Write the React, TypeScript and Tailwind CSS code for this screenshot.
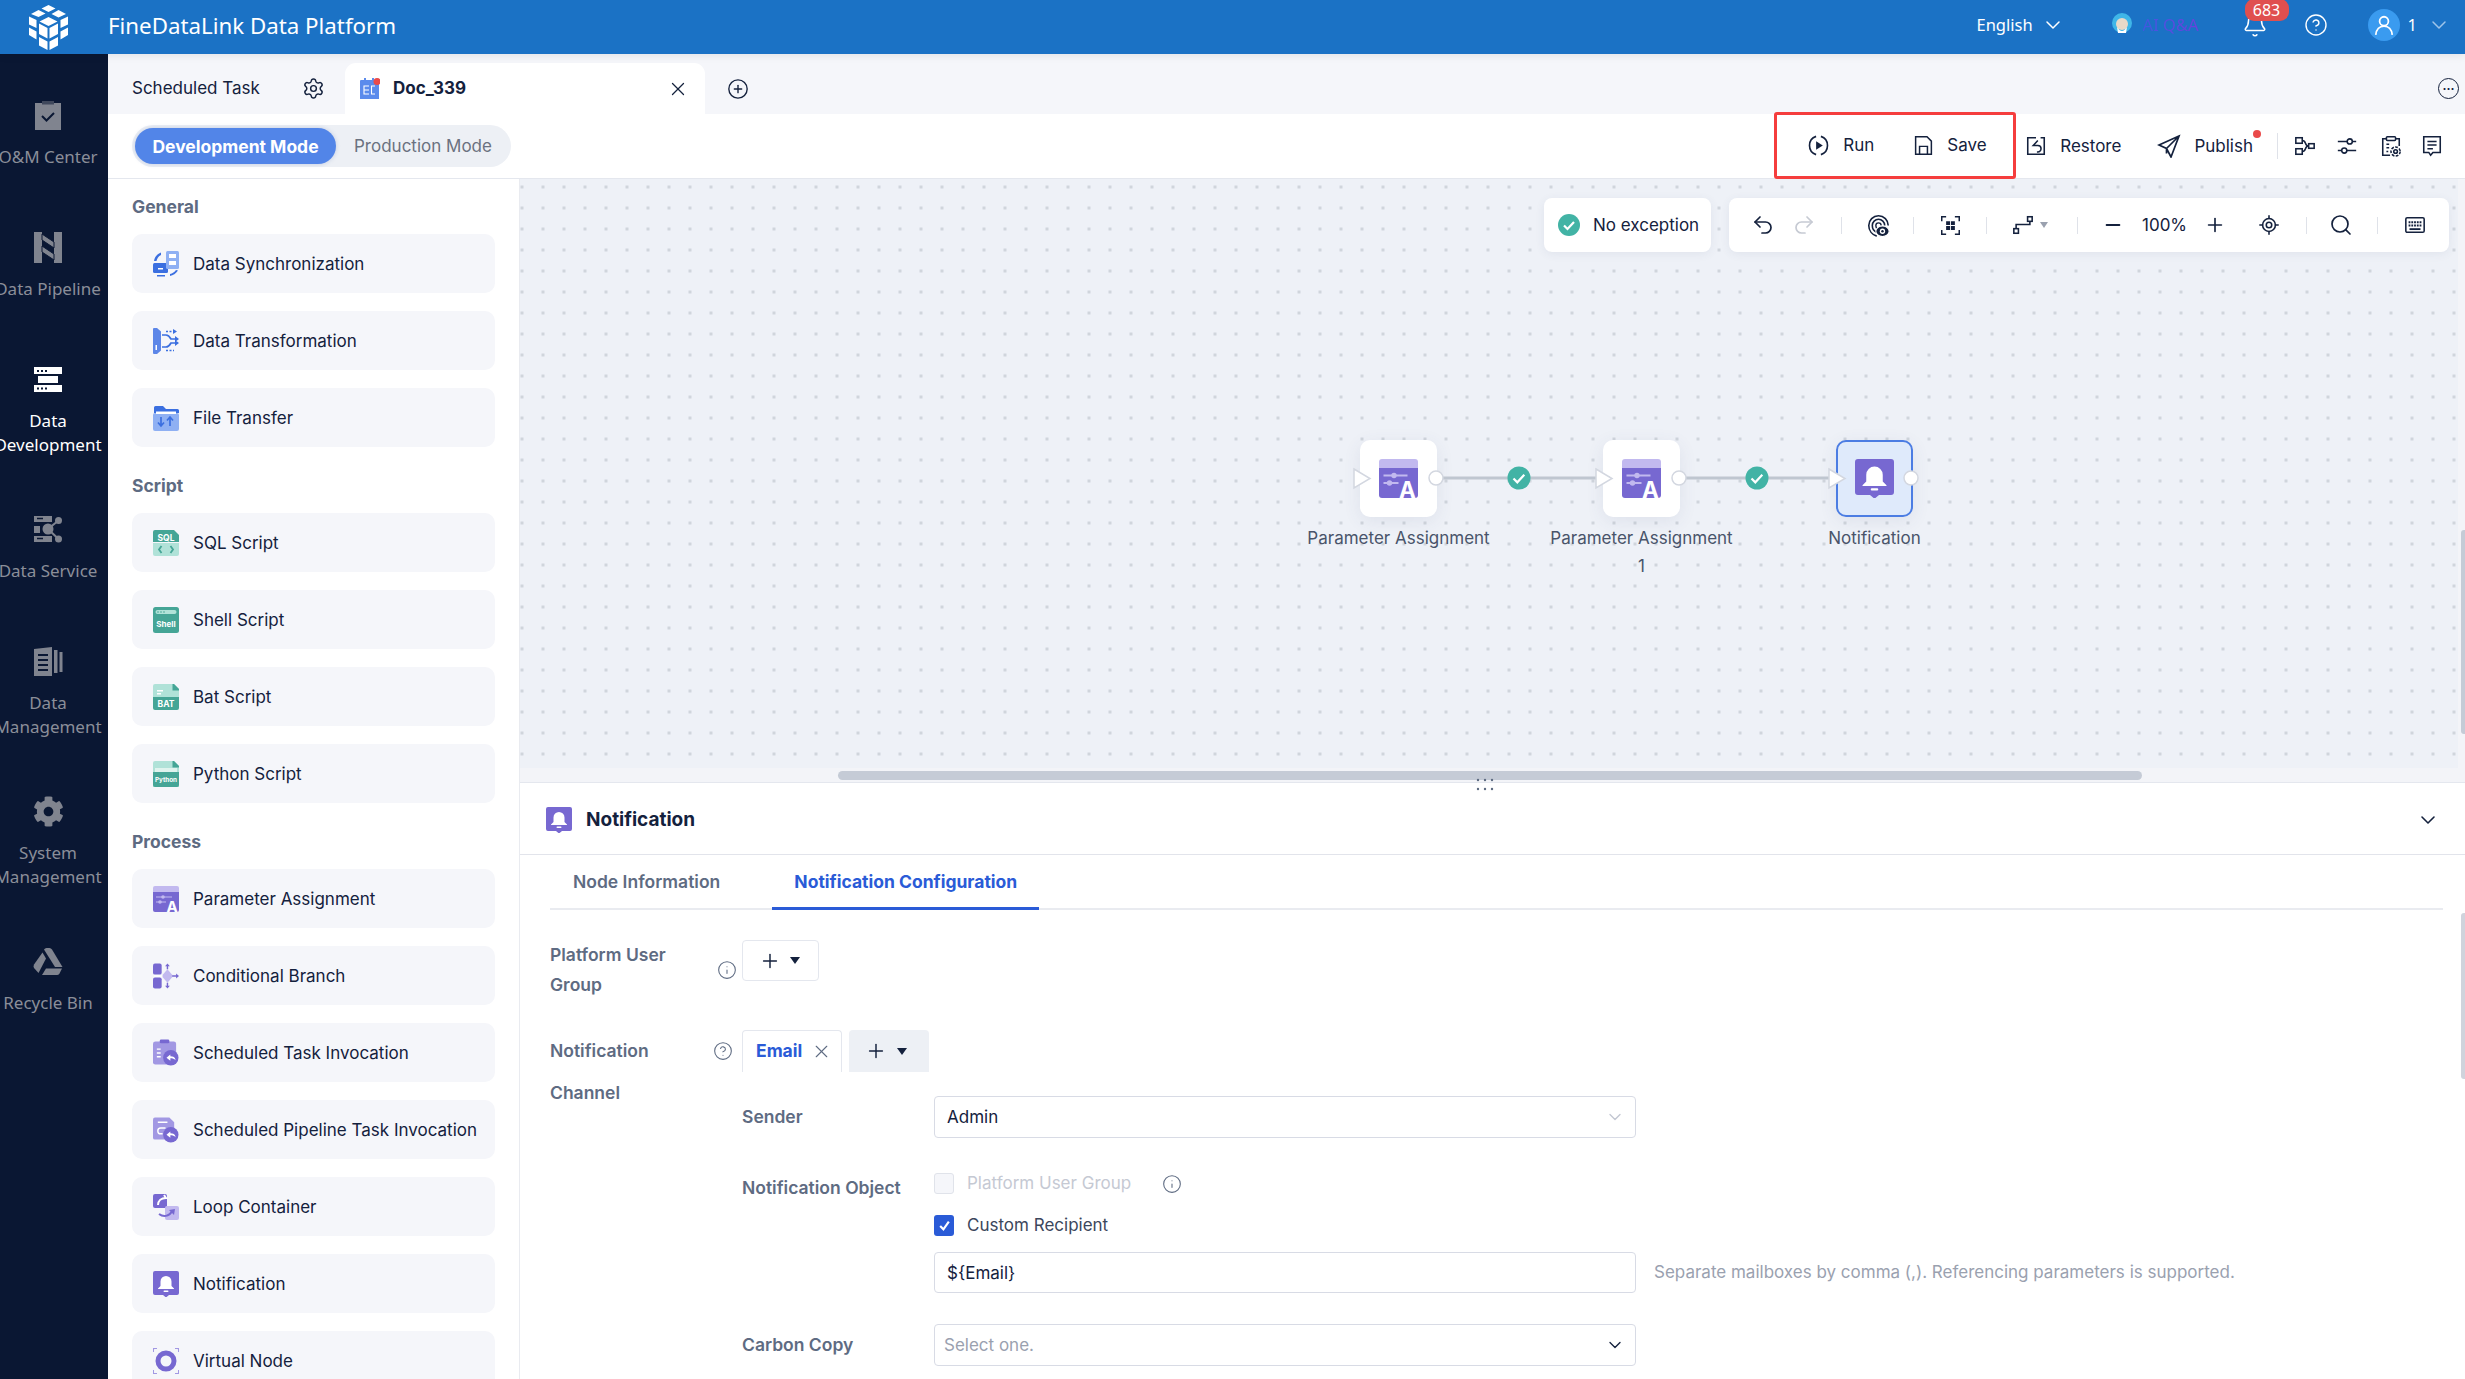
import { ReactNode } from "react";
import {
  Bell,
  ChevronDown,
  CircleHelp,
  CirclePlus,
  Info,
  LocateFixed,
  Minus,
  Plus,
  Redo2,
  Search,
  Settings,
  Undo2,
  X,
} from "lucide-react";
import { FaCog } from "react-icons/fa";

const PURPLE = "#7768d1";
const LILAC = "#c2b9ef";
const TEAL = "#45a596";
const MINT = "#b0e2d8";
const BLUE = "#3b6fe0";
const SKY = "#8fb0f3";

type IconProps = { className?: string };

/* ---------- coloured node icons ---------- */

function SyncIcon({ className }: IconProps) {
  return (
    <svg viewBox="0 0 26 26" className={className}>
      <rect x="0" y="12" width="15" height="10" rx="1.5" fill={BLUE} />
      <rect x="5" y="17" width="5" height="1.5" fill="#fff" />
      <path d="M4 24h8v1.5H4z" fill={BLUE} />
      <rect x="13" y="0" width="13" height="18" rx="1.5" fill={SKY} />
      <rect x="16" y="3" width="7" height="4" fill="#fff" />
      <rect x="16" y="10" width="7" height="4" fill="#fff" />
      <path d="M1 10c.5-4 3-7 7-8.500v2.500c-2.500 1-4 3.500-4.500 6z" fill={BLUE} />
      <path d="M17 25c3-.5 6-2.500 8-5.500l-2-.5c-1.500 2-3.500 3.500-6 4z" fill={BLUE} />
    </svg>
  );
}

function TransformIcon({ className }: IconProps) {
  return (
    <svg viewBox="0 0 26 26" className={className}>
      <path d="M1 0h3l4 3.500v19L4 26H1a1 1 0 0 1-1-1V1a1 1 0 0 1 1-1z" fill="#5c86e8" />
      <rect x="2.500" y="17" width="1.500" height="5" fill="#fff" />
      <g fill="none" stroke={BLUE} strokeWidth="1.700">
        <path d="M9 7h4c2 0 3 .5 5 4h4" />
        <path d="M9 19h4c2 0 3-.5 5-4h4" />
        <path d="M13 3.500h8" strokeDasharray="2 1.500" />
        <path d="M13 22.500h8" strokeDasharray="2 1.500" />
      </g>
      <path d="M22 8l4 3-4 3zM22 12l4 3-4 3z" fill={BLUE} />
      <path d="M20 1l4 2.500-4 2.500z" fill={BLUE} />
    </svg>
  );
}

function FolderIcon({ className }: IconProps) {
  return (
    <svg viewBox="0 0 26 26" className={className}>
      <path d="M1 6V2.500A1.500 1.500 0 0 1 2.500 1H10l3 3h11.500A1.500 1.500 0 0 1 26 5.500V8H1z" fill={BLUE} />
      <rect x="0" y="8" width="26" height="18" rx="2" fill={SKY} />
      <path d="M3 6.500h20V9H3z" fill="#fff" />
      <path d="M8 12v8M5 17.500l3 3.500 3-3.500" stroke={BLUE} strokeWidth="1.700" fill="none" />
      <path d="M17 21v-8M14 15.500l3-3.500 3 3.500" stroke={BLUE} strokeWidth="1.700" fill="none" />
    </svg>
  );
}

function SqlIcon({ className }: IconProps) {
  return (
    <svg viewBox="0 0 26 26" className={className}>
      <path d="M2 0h19l5 5v7H0V2a2 2 0 0 1 2-2z" fill={TEAL} />
      <path d="M0 13h26v11a2 2 0 0 1-2 2H2a2 2 0 0 1-2-2z" fill={MINT} />
      <text x="13" y="10.500" textAnchor="middle" fontSize="8.500" fontWeight="700" fill="#fff" fontFamily="Inter, sans-serif">SQL</text>
      <path d="M8.500 16l-2.500 3.500 2.500 3.500M17.500 16l2.500 3.500-2.500 3.500" fill="none" stroke={TEAL} strokeWidth="1.800" />
    </svg>
  );
}

function ShellIcon({ className }: IconProps) {
  return (
    <svg viewBox="0 0 26 26" className={className}>
      <rect width="26" height="26" rx="2.500" fill={TEAL} />
      <rect x="2.500" y="3" width="21" height="4" rx="2" fill={MINT} />
      <circle cx="5" cy="5" r=".8" fill={TEAL} />
      <circle cx="8" cy="5" r=".8" fill={TEAL} />
      <circle cx="11" cy="5" r=".8" fill={TEAL} />
      <text x="13" y="19.500" textAnchor="middle" fontSize="8" fontWeight="700" fill="#fff" fontFamily="Inter, sans-serif">Shell</text>
    </svg>
  );
}

function BatIcon({ className }: IconProps) {
  return (
    <svg viewBox="0 0 26 26" className={className}>
      <path d="M2 0h19l5 5v8H0V2a2 2 0 0 1 2-2z" fill={MINT} />
      <path d="M19.500 0H21l5 5v1.500h-6.500z" fill={TEAL} />
      <path d="M4 6h6v1.500H4zM4 9h4v1.500H4z" fill="#fff" />
      <path d="M0 13h26v11a2 2 0 0 1-2 2H2a2 2 0 0 1-2-2z" fill={TEAL} />
      <text x="13" y="22.500" textAnchor="middle" fontSize="8.500" fontWeight="700" fill="#fff" fontFamily="Inter, sans-serif">BAT</text>
    </svg>
  );
}

function PythonIcon({ className }: IconProps) {
  return (
    <svg viewBox="0 0 26 26" className={className}>
      <path d="M2 0h19l5 5v21H0V2a2 2 0 0 1 2-2z" fill={MINT} />
      <path d="M19.500 0H21l5 5v1.500h-6.500z" fill={TEAL} />
      <path d="M2 7h22v4H2z" fill="#dff3ee" />
      <path d="M0 11h26v13a2 2 0 0 1-2 2H2a2 2 0 0 1-2-2z" fill={TEAL} />
      <text x="13" y="21" textAnchor="middle" fontSize="6.300" fontWeight="700" fill="#fff" fontFamily="Inter, sans-serif">Python</text>
    </svg>
  );
}

function ParamIcon({ className }: IconProps) {
  return (
    <svg viewBox="0 0 26 26" className={className}>
      <path d="M2 0h22a2 2 0 0 1 2 2v4H0V2a2 2 0 0 1 2-2z" fill={LILAC} />
      <path d="M0 6h26v18a2 2 0 0 1-2 2H2a2 2 0 0 1-2-2z" fill={PURPLE} />
      <path d="M3 11h16M3 16h10" stroke={LILAC} strokeWidth="1.200" />
      <circle cx="10" cy="11" r="1.800" fill={LILAC} />
      <circle cx="7" cy="16" r="1.800" fill={LILAC} />
      <text x="19" y="26" textAnchor="middle" fontSize="15" fontWeight="700" fill="#fff" fontFamily="Inter, sans-serif">A</text>
    </svg>
  );
}

function BranchIcon({ className }: IconProps) {
  return (
    <svg viewBox="0 0 27 26" className={className}>
      <rect x="0" y="0" width="9" height="11.500" rx="2" fill={PURPLE} />
      <rect x="0" y="14.500" width="9" height="11.500" rx="2" fill={PURPLE} />
      <path d="M15 6l6 7-6 7-6-7z" fill={LILAC} />
      <path d="M1 13h9" stroke="#fff" strokeWidth="1.500" />
      <path d="M15 6V2M15 20v4M20 13h5" stroke={PURPLE} strokeWidth="1.500" />
      <path d="M12.500 3L15 0l2.500 3zM12.500 23l2.500 3 2.500-3zM24 10.500l3 2.500-3 2.500z" fill={PURPLE} />
    </svg>
  );
}

function InvokeIcon({ className, pipeline }: IconProps & { pipeline?: boolean }) {
  return (
    <svg viewBox="0 0 27 27" className={className}>
      {pipeline ? (
        <path d="M2 1h15l5 5v18H2a2 2 0 0 1-2-2V3a2 2 0 0 1 2-2z" fill="#a298e3" />
      ) : (
        <>
          <rect x="0" y="2" width="24" height="24" rx="2.500" fill="#a298e3" />
          <rect x="7" y="0" width="10" height="4" rx="1.500" fill={PURPLE} />
        </>
      )}
      {pipeline ? (
        <path d="M5 6h10M13 12H8a3 3 0 0 0 0 6h2" stroke="#fff" strokeWidth="1.500" fill="none" />
      ) : (
        <path d="M4 10h4M4 14h4M4 18h4" stroke="#fff" strokeWidth="1.500" />
      )}
      <circle cx="18.500" cy="19" r="8" fill={PURPLE} />
      <path d="M14 19l4-3.500v2c3 0 5 1 5.500 4-1.500-1.500-3-2-5.500-2v2.500z" fill="#fff" />
    </svg>
  );
}

function LoopIcon({ className }: IconProps) {
  return (
    <svg viewBox="0 0 26 26" className={className}>
      <rect x="0" y="0" width="14" height="14" rx="2" fill={PURPLE} />
      <rect x="12" y="12" width="14" height="14" rx="2" fill={LILAC} />
      <path d="M5 11c0-4 3-7 8-7l-2-3" stroke="#fff" strokeWidth="2" fill="none" />
      <path d="M6 20c4 3 10 3 13-3" stroke={PURPLE} strokeWidth="2" fill="none" />
      <path d="M16 16l6-1-1 6z" fill={PURPLE} />
    </svg>
  );
}

function NoticeIcon({ className }: IconProps) {
  return (
    <svg viewBox="0 0 26 26" className={className}>
      <path d="M2 0h22a2 2 0 0 1 2 2v20a2 2 0 0 1-2 2h-8l-3 2.500L10 24H2a2 2 0 0 1-2-2V2a2 2 0 0 1 2-2z" fill={PURPLE} />
      <path d="M13 5a5.500 5.500 0 0 1 5.500 5.500V15l2.500 2.500V18H5v-.5L7.500 15v-4.500A5.500 5.500 0 0 1 13 5z" fill="#fff" />
      <rect x="10.500" y="19.500" width="5" height="1.500" rx=".7" fill="#fff" />
    </svg>
  );
}

function VirtualIcon({ className }: IconProps) {
  return (
    <svg viewBox="0 0 26 26" className={className}>
      <circle cx="13" cy="13" r="8" fill="none" stroke={PURPLE} strokeWidth="5" />
      <path d="M0 4V1.500A1.500 1.500 0 0 1 1.500 0H4M22 0h2.500A1.500 1.500 0 0 1 26 1.500V4M26 22v2.500a1.500 1.500 0 0 1-1.500 1.500H22M4 26H1.500A1.500 1.500 0 0 1 0 24.500V22" fill="none" stroke="#a298e3" strokeWidth="2" />
    </svg>
  );
}

/* ---------- side rail icons ---------- */

function RailClipboard({ className }: IconProps) {
  return (
    <svg viewBox="0 0 26 29" className={className}>
      <path d="M0 2h7V0h12v2h7v29H0z" fill="#80848f" />
      <rect x="7" y="0" width="12" height="3.500" fill="#0a1733" opacity=".55" />
      <path d="M7 15l4.500 4.500L19 12" fill="none" stroke="#0a1733" strokeWidth="2" />
    </svg>
  );
}

function RailPipeline({ className }: IconProps) {
  return (
    <svg viewBox="0 0 28 31" className={className}>
      <path d="M0 0h8v31H0zM20 0h8v31h-8z" fill="#80848f" />
      <path d="M8 2l12 8v6L8 8zM8 14l12 8v6L8 20z" fill="#80848f" stroke="#0a1733" strokeWidth="1" />
    </svg>
  );
}

function RailDev({ className }: IconProps) {
  return (
    <svg viewBox="0 0 28 25" className={className}>
      <path d="M0 0h28v7H0zM0 18h28v7H0z" fill="#fff" />
      <path d="M4 9h20v7H4z" fill="#fff" />
      <path d="M3 3h2v2H3zM7 3h2v2H7zM11 3h2v2h-2zM3 20.500h2v2H3zM7 20.500h2v2H7zM11 20.500h2v2h-2z" fill="#0a1733" />
    </svg>
  );
}

function RailService({ className }: IconProps) {
  return (
    <svg viewBox="0 0 28 28" className={className}>
      <path d="M0 1h18v6H0zM0 11h6v7H0zM0 21h18v6H0z" fill="#80848f" />
      <path d="M3 3.500h6M3 23.500h6" stroke="#0a1733" strokeWidth="1.500" />
      <circle cx="14" cy="14" r="5.500" fill="#80848f" />
      <circle cx="24.500" cy="5.500" r="3.500" fill="#80848f" />
      <circle cx="24.500" cy="24" r="3.500" fill="#80848f" />
      <path d="M14 14L24.500 5.500M14 14l10.500 10" stroke="#80848f" strokeWidth="2" />
    </svg>
  );
}

function RailManage({ className }: IconProps) {
  return (
    <svg viewBox="0 0 29 29" className={className}>
      <path d="M0 2l18-2v29H0z" fill="#80848f" />
      <path d="M4 8h10M4 13h10M4 18h10M4 23h10" stroke="#0a1733" strokeWidth="2" />
      <rect x="20" y="3" width="3.500" height="23" fill="#80848f" />
      <rect x="25.500" y="5" width="3" height="20" fill="#80848f" />
    </svg>
  );
}

function RailRecycle({ className }: IconProps) {
  return (
    <svg viewBox="0 0 30 27" className={className}>
      <path d="M11 1.500Q12 0 13.500 0h3Q18 0 19 1.500L29.500 19 22 19 11 1.500z" fill="#80848f" />
      <path d="M9.500 4.500L13 10.500 5.500 25 1 20Q0 18.500 1 16.500z" fill="#80848f" />
      <path d="M9 27l4-6.500h16l-2.500 5Q25.500 27 24 27z" fill="#80848f" />
    </svg>
  );
}

function Logo({ className }: IconProps) {
  return (
    <svg viewBox="0 0 41 45" className={className} fill="#fff">
      <path d="M20.500 0l7 3.500-7 3.500-7-3.500zM10.500 5l7 3.500-7 3.500L3 9zM30.500 5l7.500 4-7.500 3.500-7-3.500z" />
      <path d="M20.500 12l9 4.500-9 4.500-9-4.500zM11 18.500l8.500 4.500v10.500L11 29zM30 18.500v10.500l-8.500 4.500V23z" />
      <path d="M1 11.500l7.500 3.500v8L1 19.500zM40 11.500v8L32.500 23v-8zM1 22.500l7.500 4v8L1 30zM40 22.500V30l-7.500 4.500v-8z" />
      <path d="M11 32l8.500 4.500V45l-8.500-4.500zM30 32v8.500L21.500 45v-8.500z" />
    </svg>
  );
}

/* ---------- toolbar icons ---------- */

const line = {
  fill: "none",
  stroke: "#14213d",
  strokeWidth: 1.7,
};

function RunIcon({ className }: IconProps) {
  return (
    <svg viewBox="0 0 24 24" className={className} {...line}>
      <path d="M9.500 2.500a10 10 0 0 0 0 19M14.500 2.500a10 10 0 0 1 0 19" />
      <path d="M9.500 7.500l7 4.500-7 4.500z" fill="#14213d" stroke="none" />
    </svg>
  );
}

function SaveIcon({ className }: IconProps) {
  return (
    <svg viewBox="0 0 24 24" className={className} {...line}>
      <path d="M3 2h13l5 5v15H3z" />
      <path d="M7.500 22v-9h9v9" />
    </svg>
  );
}

function RestoreIcon({ className }: IconProps) {
  return (
    <svg viewBox="0 0 24 24" className={className} {...line}>
      <path d="M12 3H3v18h18V3h-4" />
      <path d="M14 6l-5 5.500h5a3.500 3.500 0 0 1 0 7h-1" />
    </svg>
  );
}

function PublishIcon({ className }: IconProps) {
  return (
    <svg viewBox="0 0 24 24" className={className} {...line}>
      <path d="M22 2L2 11l7.500 3.500L14 23zM22 2L9.500 14.500v5" />
    </svg>
  );
}

function FlowIcon({ className }: IconProps) {
  return (
    <svg viewBox="0 0 24 24" className={className} {...line}>
      <rect x="2" y="3" width="7" height="6" />
      <rect x="2" y="15" width="7" height="6" />
      <rect x="16" y="9.500" width="6" height="5" />
      <path d="M9 6c5 0 2 6 7 6M9 18c5 0 2-6 7-6" />
    </svg>
  );
}

function SlidersIcon({ className }: IconProps) {
  return (
    <svg viewBox="0 0 24 24" className={className} {...line}>
      <path d="M2 7h20M2 17h20" />
      <circle cx="15" cy="7" r="2.800" fill="#fff" />
      <circle cx="9" cy="17" r="2.800" fill="#fff" />
    </svg>
  );
}

function ClipGearIcon({ className }: IconProps) {
  return (
    <svg viewBox="0 0 24 24" className={className} {...line}>
      <path d="M11 22H3V4h4M17 4h4v8" />
      <rect x="7" y="2" width="10" height="4" rx="1" />
      <path d="M7 10h3M7 14h3M7 18h2" />
      <circle cx="17" cy="18" r="2" />
      <circle cx="17" cy="18" r="5" strokeDasharray="3 1.500" />
    </svg>
  );
}

function NoteIcon({ className }: IconProps) {
  return (
    <svg viewBox="0 0 24 24" className={className} {...line}>
      <path d="M3 2h18v17h-8l-2.500 3-2-3H3z" />
      <path d="M7 7h10M7 11h10M7 15h6" />
    </svg>
  );
}

function WatchIcon({ className }: IconProps) {
  return (
    <svg viewBox="0 0 24 26" className={className} {...line}>
      <path d="M10 25C5 23.500 1 19 1 13a11 11 0 0 1 22 0" strokeWidth="1.800" />
      <path d="M10 20.500C7 19.500 5 16.500 5 13a7 7 0 0 1 14 0" strokeWidth="1.800" />
      <path d="M10 16.500C9.500 15.500 9 14.500 9 13a3 3 0 0 1 6 0" strokeWidth="1.600" />
      <ellipse cx="16.500" cy="19.500" rx="7.500" ry="6" fill="#14213d" stroke="#fff" strokeWidth="1.200" />
      <circle cx="16.500" cy="19.500" r="3" fill="#fff" stroke="none" />
      <circle cx="16.500" cy="19.500" r="1.400" fill="#14213d" stroke="none" />
    </svg>
  );
}

function FitIcon({ className }: IconProps) {
  return (
    <svg viewBox="0 0 24 24" className={className} {...line}>
      <path d="M2 7V2h5M17 2h5v5M22 17v5h-5M7 22H2v-5" />
      <path d="M7 7h4.500v4.500H7zM12.500 7H17v4.500h-4.500zM7 12.500h4.500V17H7zM12.500 12.500H17V17h-4.500z" fill="#14213d" stroke="none" />
    </svg>
  );
}

function RouteIcon({ className }: IconProps) {
  return (
    <svg viewBox="0 0 24 24" className={className} {...line}>
      <rect x="2" y="16" width="5" height="5" />
      <rect x="17" y="3" width="5" height="5" />
      <path d="M4.500 16v-4.500h15V8" />
    </svg>
  );
}

function KeyboardIcon({ className }: IconProps) {
  return (
    <svg viewBox="0 0 24 24" className={className} {...line}>
      <rect x="2" y="4" width="20" height="16" rx="1.500" />
      <path d="M5 9h14M5 12.500h14" strokeWidth="2" strokeDasharray="2 1" />
      <path d="M6 16.500h12" strokeWidth="2" />
    </svg>
  );
}

function CheckDot({ className }: IconProps) {
  return (
    <svg viewBox="0 0 22 22" className={className}>
      <circle cx="11" cy="11" r="11" fill="#42b3a5" />
      <path d="M6 11.500l3.500 3.500 6.500-7" fill="none" stroke="#fff" strokeWidth="2.200" />
    </svg>
  );
}

function DocTabIcon({ className }: IconProps) {
  return (
    <svg viewBox="0 0 20 21" className={className}>
      <path d="M1 2h3V0h2v2h6V0h2v2h5v19H0V3a1 1 0 0 1 1-1z" fill="#5b8bec" />
      <path d="M9 8H4v8h5M4 12h5M15 8h-3.500v8H15" stroke="#fff" strokeWidth="1.100" fill="none" />
      <circle cx="17" cy="3.500" r="3.500" fill="#ea4a4a" />
    </svg>
  );
}

/* ---------- small pieces ---------- */

const rail: { label: string[]; icon: ReactNode; tall?: boolean; active?: boolean }[] = [
  { label: ["O&M Center"], icon: <RailClipboard className="h-[29px] w-[26px]" /> },
  { label: ["Data Pipeline"], icon: <RailPipeline className="h-[31px] w-[28px]" /> },
  { label: ["Data", "Development"], icon: <RailDev className="h-[25px] w-[28px]" />, tall: true, active: true },
  { label: ["Data Service"], icon: <RailService className="h-[28px] w-[28px]" /> },
  { label: ["Data", "Management"], icon: <RailManage className="h-[29px] w-[29px]" />, tall: true },
  { label: ["System", "Management"], icon: <FaCog className="h-[31px] w-[31px] text-[#80848f]" />, tall: true },
  { label: ["Recycle Bin"], icon: <RailRecycle className="h-[27px] w-[30px]" /> },
];

const groups: { title: string; items: { name: string; icon: ReactNode }[] }[] = [
  {
    title: "General",
    items: [
      { name: "Data Synchronization", icon: <SyncIcon className="h-[26px] w-[26px]" /> },
      { name: "Data Transformation", icon: <TransformIcon className="h-[26px] w-[26px]" /> },
      { name: "File Transfer", icon: <FolderIcon className="h-[26px] w-[26px]" /> },
    ],
  },
  {
    title: "Script",
    items: [
      { name: "SQL Script", icon: <SqlIcon className="h-[26px] w-[26px]" /> },
      { name: "Shell Script", icon: <ShellIcon className="h-[26px] w-[26px]" /> },
      { name: "Bat Script", icon: <BatIcon className="h-[26px] w-[26px]" /> },
      { name: "Python Script", icon: <PythonIcon className="h-[26px] w-[26px]" /> },
    ],
  },
  {
    title: "Process",
    items: [
      { name: "Parameter Assignment", icon: <ParamIcon className="h-[26px] w-[26px]" /> },
      { name: "Conditional Branch", icon: <BranchIcon className="h-[26px] w-[27px]" /> },
      { name: "Scheduled Task Invocation", icon: <InvokeIcon className="h-[27px] w-[27px]" /> },
      { name: "Scheduled Pipeline Task Invocation", icon: <InvokeIcon pipeline className="h-[27px] w-[27px]" /> },
      { name: "Loop Container", icon: <LoopIcon className="h-[26px] w-[26px]" /> },
      { name: "Notification", icon: <NoticeIcon className="h-[26px] w-[26px]" /> },
      { name: "Virtual Node", icon: <VirtualIcon className="h-[26px] w-[26px]" /> },
    ],
  },
];

function Sep() {
  return <span className="block h-[17px] w-px bg-[#dfe2e9]" />;
}

function Action({ icon, children, className }: { icon: ReactNode; children: ReactNode; className?: string }) {
  return (
    <div className={`flex items-center gap-[13px] ${className ?? ""}`}>
      {icon}
      <span className="pt-[2px]">{children}</span>
    </div>
  );
}

function GraphNode({ className, label, selected }: { className: string; label: string; selected?: boolean }) {
  return (
    <div
      className={`absolute top-[261px] flex h-[77px] w-[77px] items-center justify-center rounded-[10px] shadow-[0_4px_18px_rgba(70,80,120,0.09)] ${
        selected ? "border-2 border-[#4c7de3] bg-[#dfeafb]" : "bg-white"
      } ${className}`}
    >
      {selected ? <NoticeIcon className="h-[39px] w-[39px]" /> : <ParamIcon className="h-[39px] w-[39px]" />}
      <div
        className={`absolute left-1/2 w-[192px] -translate-x-1/2 text-center text-[17px] leading-[28px] text-[#49546a] ${
          selected ? "top-[82px]" : "top-[84px]"
        }`}
      >
        {label}
      </div>
    </div>
  );
}

function Wires() {
  const tri = [834, 1076, 1309];
  const ports = [916, 1159, 1391];
  const checks = [999, 1237];
  return (
    <svg className="pointer-events-none absolute inset-0 h-full w-full">
      <path d="M923 299H1090M1166 299H1316" stroke="#bfc6d0" strokeWidth="3" />
      {tri.map((x) => (
        <path key={x} d={`M${x} 290l16 9.500-16 9.500z`} fill="#fff" stroke="#d3d7e0" strokeWidth="1.500" />
      ))}
      {ports.map((x) => (
        <circle key={x} cx={x} cy="299" r="7" fill="#fff" stroke="#d3d7e0" strokeWidth="1.500" />
      ))}
      {checks.map((x) => (
        <g key={x}>
          <circle cx={x} cy="299" r="11.500" fill="#42b3a5" />
          <path d={`M${x - 5.500} 299.500l3.800 3.800 7-7.500`} fill="none" stroke="#fff" strokeWidth="2.200" />
        </g>
      ))}
    </svg>
  );
}

function SelectBox({ placeholder, value }: { placeholder?: string; value?: string }) {
  return (
    <div className="flex h-[42px] w-[702px] items-center justify-between rounded-[4px] border border-[#d8dbe5] pr-[10px] pl-[12px]">
      {value ? (
        <span className="pt-[2px]">{value}</span>
      ) : (
        <span className="-ml-[3px] pt-[2px] text-[#9aa1af]">{placeholder}</span>
      )}
      <ChevronDown className={value ? "h-[20px] w-[20px] text-[#c2c7d2]" : "h-[20px] w-[20px] text-[#14213d]"} strokeWidth={1.6} />
    </div>
  );
}

export default function App() {
  return (
    <div className="flex h-[1379px] w-[2465px] flex-col overflow-hidden bg-white font-['Inter',sans-serif] text-[17px] text-[#14213d]">
      <header className="relative z-10 flex h-[54px] shrink-0 items-center bg-[#1b72c5] pr-[14px] pl-[28px] font-['Noto_Sans',sans-serif] text-white shadow-[0_2px_8px_rgba(0,0,0,0.08)]">
        <Logo className="h-[45px] w-[41px]" />
        <span className="ml-[39px] pb-[2px] text-[22.300px]">FineDataLink Data Platform</span>
        <div className="ml-auto flex items-center text-[16.500px]">
          <span className="pb-[4px]">English</span>
          <ChevronDown className="ml-[8px] h-[24px] w-[24px] -translate-y-[2px]" strokeWidth={1.5} />
          <svg viewBox="0 0 22 26" className="ml-[46px] h-[26px] w-[22px] -translate-y-[2px]">
            <circle cx="11" cy="11" r="10" fill="#3fb6e8" />
            <circle cx="11" cy="12" r="6" fill="#e9d9c8" />
            <path d="M6 15q5 8 10 0l-1 6H7z" fill="#fff" />
          </svg>
          <span className="ml-[10px] bg-linear-to-r from-[#3f58e0] to-[#6a3fdc] bg-clip-text pb-[4px] text-transparent">AI Q&amp;A</span>
          <div className="relative ml-[43px] h-[26px] w-[26px] -translate-y-[2px]">
            <Bell className="h-[26px] w-[26px]" strokeWidth={1.4} />
            <span className="absolute -top-[13px] left-[3px] flex h-[22px] w-[44px] items-center justify-center rounded-[9px] bg-[#e04f4f] text-[16px]">
              683
            </span>
          </div>
          <CircleHelp className="ml-[36px] h-[24px] w-[24px] -translate-y-[2px]" strokeWidth={1.4} />
          <span className="ml-[40px] flex h-[32px] w-[32px] -translate-y-[2px] items-center justify-center rounded-full bg-[#3a9bf0]">
            <svg viewBox="0 0 20 20" className="h-[22px] w-[22px]" fill="none" stroke="#fff" strokeWidth="1.600">
              <circle cx="10" cy="6.500" r="4" />
              <path d="M2.500 19c.5-5 3.500-8 7.500-8s7 3 7.500 8" />
            </svg>
          </span>
          <span className="ml-[8px] pb-[4px]">1</span>
          <ChevronDown className="ml-[10px] h-[24px] w-[24px] -translate-y-[2px] text-[#9fc4ea]" strokeWidth={1.5} />
        </div>
      </header>

      <div className="flex min-h-0 flex-1">
        <aside className="w-[108px] shrink-0 bg-[#0a1733] pt-[46px] font-['Noto_Sans',sans-serif] text-[17px] leading-[24px]">
          {rail.map((r) => (
            <div key={r.label[0] + r.label.length} className={`flex w-[96px] flex-col items-center ${r.tall ? "h-[150px]" : "h-[132px]"}`}>
              <div className="flex h-[30px] items-center">{r.icon}</div>
              <div className={`mt-[15px] text-center whitespace-nowrap ${r.active ? "text-white" : "text-[#8a8e99]"}`}>
                {r.label.map((l) => (
                  <div key={l}>{l}</div>
                ))}
              </div>
            </div>
          ))}
        </aside>

        <main className="flex min-w-0 flex-1 flex-col">
          <div className="flex h-[60px] shrink-0 items-end bg-[#f5f6fa] pr-[6px] pl-[24px]">
            <div className="flex h-[51px] w-[213px] items-center justify-between pr-[20px]">
              <span>Scheduled Task</span>
              <Settings className="h-[23px] w-[23px]" strokeWidth={1.5} />
            </div>
            <div className="flex h-[51px] w-[360px] items-center rounded-t-[11px] bg-white pr-[16px] pl-[15px]">
              <DocTabIcon className="h-[21px] w-[20px]" />
              <span className="ml-[13px] font-bold">Doc_339</span>
              <X className="ml-auto h-[22px] w-[22px]" strokeWidth={1.4} />
            </div>
            <div className="ml-[22px] flex h-[51px] items-center">
              <CirclePlus className="h-[22px] w-[22px]" strokeWidth={1.5} />
            </div>
            <div className="ml-auto flex h-[51px] items-center">
              <span className="flex h-[21px] w-[21px] items-center justify-center rounded-full border-[1.5px] border-[#14213d] pb-[6px] text-[12px] leading-none font-bold">
                ...
              </span>
            </div>
          </div>

          <div className="flex h-[65px] shrink-0 items-center border-b border-[#e4e7ee] pr-[22px] pl-[24px]">
            <div className="flex h-[42px] w-[379px] items-center rounded-full bg-[#edf0f5] pl-[3px]">
              <span className="flex h-[36px] w-[201px] items-center justify-center rounded-full bg-[#5285e8] pt-[2px] text-[17.500px] font-bold text-white shadow-[0_0_4px_rgba(60,90,170,0.25)]">
                Development Mode
              </span>
              <span className="ml-[18px] pt-[2px] text-[#6b7280]">Production Mode</span>
            </div>

            <div className="mb-[2px] ml-auto flex h-[67px] w-[242px] items-center rounded-[3px] border-[3px] border-[#f53d3d] pl-[30px]">
              <Action icon={<RunIcon className="h-[23px] w-[23px]" />}>Run</Action>
              <Action className="ml-[39px]" icon={<SaveIcon className="h-[21px] w-[21px]" />}>Save</Action>
            </div>
            <Action className="ml-[9px]" icon={<RestoreIcon className="h-[22px] w-[22px]" />}>Restore</Action>
            <Action className="relative ml-[36px]" icon={<PublishIcon className="h-[24px] w-[24px]" />}>
              Publish
              <span className="absolute -top-[2px] -right-[8px] h-[8px] w-[8px] rounded-full bg-[#ea4a4a]" />
            </Action>
            <span className="ml-[24px] h-[26px] w-px bg-[#dfe2e9]" />
            <FlowIcon className="ml-[16px] h-[22px] w-[22px]" />
            <SlidersIcon className="ml-[20px] h-[22px] w-[22px]" />
            <ClipGearIcon className="ml-[22px] h-[22px] w-[22px]" />
            <NoteIcon className="ml-[19px] h-[22px] w-[22px]" />
          </div>

          <div className="flex min-h-0 flex-1">
            <nav className="w-[412px] shrink-0 overflow-hidden border-r border-[#e9ebf0] pt-[7px] pl-[24px]">
              {groups.map((g) => (
                <section key={g.title}>
                  <h3 className="flex h-[48px] items-end pb-[15px] text-[17.500px] leading-[24px] font-bold text-[#5e6b82]">{g.title}</h3>
                  {g.items.map((it) => (
                    <div key={it.name} className="mb-[18px] flex h-[59px] w-[363px] items-center rounded-[10px] bg-[#f5f6fa] pl-[21px]">
                      <span className="flex w-[26px] items-center justify-start">{it.icon}</span>
                      <span className="ml-[14px] pt-[2px] whitespace-nowrap">{it.name}</span>
                    </div>
                  ))}
                </section>
              ))}
            </nav>

            <div className="flex min-w-0 flex-1 flex-col">
              <div className="relative h-[604px] shrink-0 border-b border-[#e4e7ee] bg-[#f3f4f8]">
                <div className="relative h-[589px] w-[1938px] overflow-hidden bg-[#eef1f7] bg-[radial-gradient(circle,#d0d4dc_1.4px,transparent_1.6px)] bg-size-[21px_21px] bg-position-[-8.5px_-2.5px]">
                  <div className="absolute top-[19px] left-[1024px] flex h-[54px] w-[167px] items-center rounded-[8px] bg-white pl-[14px] shadow-[0_2px_10px_rgba(70,80,120,0.08)]">
                    <CheckDot className="h-[22px] w-[22px]" />
                    <span className="ml-[13px] pt-[2px]">No exception</span>
                  </div>
                  <div className="absolute top-[19px] left-[1209px] flex h-[54px] w-[720px] items-center rounded-[8px] bg-white pl-[22px] shadow-[0_2px_10px_rgba(70,80,120,0.08)]">
                    <Undo2 className="h-[24px] w-[24px]" strokeWidth={1.7} />
                    <Redo2 className="ml-[17px] h-[24px] w-[24px] text-[#c6cad3]" strokeWidth={1.7} />
                    <span className="ml-[25px]"><Sep /></span>
                    <WatchIcon className="ml-[25px] h-[23px] w-[23px]" />
                    <span className="ml-[23px]"><Sep /></span>
                    <FitIcon className="ml-[26px] h-[21px] w-[21px]" />
                    <span className="ml-[25px]"><Sep /></span>
                    <RouteIcon className="ml-[25px] h-[22px] w-[22px]" />
                    <span className="ml-[6px] h-0 w-0 border-x-[4px] border-t-[6px] border-x-transparent border-t-[#9aa1af]" />
                    <span className="ml-[29px]"><Sep /></span>
                    <Minus className="ml-[24px] h-[22px] w-[22px]" strokeWidth={2} />
                    <span className="ml-[18px] pt-[2px]">100%</span>
                    <Plus className="ml-[17px] h-[22px] w-[22px]" strokeWidth={1.8} />
                    <LocateFixed className="ml-[32px] h-[22px] w-[22px]" strokeWidth={1.7} />
                    <span className="ml-[26px]"><Sep /></span>
                    <Search className="ml-[22px] h-[24px] w-[24px]" strokeWidth={1.7} />
                    <span className="ml-[24px]"><Sep /></span>
                    <KeyboardIcon className="ml-[26px] h-[22px] w-[22px]" />
                  </div>

                  <GraphNode className="left-[840px]" label="Parameter Assignment" />
                  <GraphNode className="left-[1083px]" label="Parameter Assignment 1" />
                  <GraphNode selected className="left-[1316px]" label="Notification" />
                  <Wires />
                </div>
                <span className="absolute top-[592px] left-[318px] h-[9px] w-[1304px] rounded-full bg-[#c5cbd6]" />
                <span className="absolute top-[351px] right-0 h-[204px] w-[4px] rounded-l-[3px] bg-[#c5cbd6]" />
                <svg viewBox="0 0 18 13" className="absolute top-[599px] left-[956px] h-[13px] w-[18px]" fill="#5e6b82">
                  <circle cx="2" cy="2" r="1.200" />
                  <circle cx="9" cy="2" r="1.200" />
                  <circle cx="16" cy="2" r="1.200" />
                  <circle cx="2" cy="11" r="1.200" />
                  <circle cx="9" cy="11" r="1.200" />
                  <circle cx="16" cy="11" r="1.200" />
                </svg>
              </div>

              <div className="relative min-h-0 flex-1 overflow-hidden">
                <div className="flex h-[72px] items-center justify-between border-b border-[#e2e4eb] pt-[3px] pr-[25px] pl-[26px]">
                  <div className="flex items-center">
                    <NoticeIcon className="h-[26px] w-[26px]" />
                    <span className="ml-[14px] text-[19px] font-bold">Notification</span>
                  </div>
                  <ChevronDown className="h-[24px] w-[24px]" strokeWidth={1.6} />
                </div>

                <div className="mr-[22px] ml-[30px] flex h-[55px] items-stretch border-b-2 border-[#e9ebf0] text-[17.500px] font-semibold">
                  <span className="ml-[23px] flex items-center pt-[2px] text-[#5e6b82]">Node Information</span>
                  <span className="-mb-[2px] ml-[52px] flex w-[267px] items-center justify-center border-b-[3px] border-[#2a5bd7] pt-[2px] font-bold text-[#2a5bd7]">
                    Notification Configuration
                  </span>
                </div>

                <div className="pt-[30px] pl-[30px] text-[17px]">
                  <div className="flex h-[90px] items-start">
                    <div className="flex w-[192px] items-center pr-[5px] text-[17.500px] font-semibold text-[#5e6b82]">
                      <span className="w-[167px] leading-[30px]">Platform User Group</span>
                      <Info className="ml-auto h-[20px] w-[20px] text-[#5e6b82]" strokeWidth={1.3} />
                    </div>
                    <div className="flex h-[41px] w-[77px] items-center gap-[9px] rounded-[4px] border border-[#e4e7ee] pl-[16px]">
                      <Plus className="h-[22px] w-[22px]" strokeWidth={1.6} />
                      <span className="h-0 w-0 border-x-[5px] border-t-[7px] border-x-transparent border-t-[#14213d]" />
                    </div>
                  </div>

                  <div className="flex items-start">
                    <div className="w-[192px] text-[17.500px] font-semibold text-[#5e6b82]">
                      <div className="flex h-[42px] items-center pr-[9px]">
                        <span>Notification</span>
                        <CircleHelp className="ml-auto h-[20px] w-[20px]" strokeWidth={1.3} />
                      </div>
                      <div className="flex h-[42px] items-center">Channel</div>
                    </div>

                    <div>
                      <div className="flex h-[42px] items-stretch">
                        <div className="flex w-[100px] items-center rounded-t-[4px] border-x border-t border-[#e4e7ee] pl-[13px]">
                          <span className="text-[17.500px] font-bold text-[#2a5bd7]">Email</span>
                          <X className="ml-[9px] h-[21px] w-[21px] text-[#5e6b82]" strokeWidth={1.3} />
                        </div>
                        <div className="ml-[7px] flex w-[80px] items-center gap-[10px] rounded-t-[4px] bg-[#edf0f5] pl-[16px]">
                          <Plus className="h-[22px] w-[22px]" strokeWidth={1.6} />
                          <span className="h-0 w-0 border-x-[5px] border-t-[7px] border-x-transparent border-t-[#14213d]" />
                        </div>
                      </div>

                      <div className="mt-[24px] flex items-center">
                        <span className="w-[192px] text-[17.500px] font-semibold text-[#5e6b82]">Sender</span>
                        <SelectBox value="Admin" />
                      </div>

                      <div className="mt-[35px] flex items-start">
                        <span className="w-[192px] text-[17.500px] leading-[30px] font-semibold text-[#5e6b82]">Notification Object</span>
                        <div>
                          <div className="flex h-[21px] items-center">
                            <span className="h-[21px] w-[20px] rounded-[3px] border border-[#e0e3ea] bg-[#f5f6fa]" />
                            <span className="ml-[13px] text-[#c5c9d3]">Platform User Group</span>
                            <Info className="ml-[31px] h-[20px] w-[20px] text-[#5e6b82]" strokeWidth={1.3} />
                          </div>
                          <div className="mt-[21px] flex h-[21px] items-center">
                            <span className="flex h-[21px] w-[20px] items-center justify-center rounded-[3px] bg-[#2a5bd7]">
                              <svg viewBox="0 0 12 12" className="h-[13px] w-[13px]" fill="none" stroke="#fff" strokeWidth="2">
                                <path d="M2 6.500l3 3 5-7" />
                              </svg>
                            </span>
                            <span className="ml-[13px] text-[#3c475c]">Custom Recipient</span>
                          </div>
                          <div className="mt-[16px] flex items-center">
                            <div className="flex h-[41px] w-[702px] items-center rounded-[4px] border border-[#d8dbe5] pt-[2px] pl-[12px]">${"{Email}"}</div>
                            <span className="ml-[18px] text-[17px] whitespace-nowrap text-[#9aa1af]">
                              Separate mailboxes by comma (,). Referencing parameters is supported.
                            </span>
                          </div>
                        </div>
                      </div>

                      <div className="mt-[31px] flex items-center">
                        <span className="w-[192px] text-[17.500px] font-semibold text-[#5e6b82]">Carbon Copy</span>
                        <SelectBox placeholder="Select one." />
                      </div>
                    </div>
                  </div>
                </div>

                <span className="absolute top-[130px] right-0 h-[166px] w-[4px] rounded-l-[3px] bg-[#d0d3dc]" />
              </div>
            </div>
          </div>
        </main>
      </div>
    </div>
  );
}
